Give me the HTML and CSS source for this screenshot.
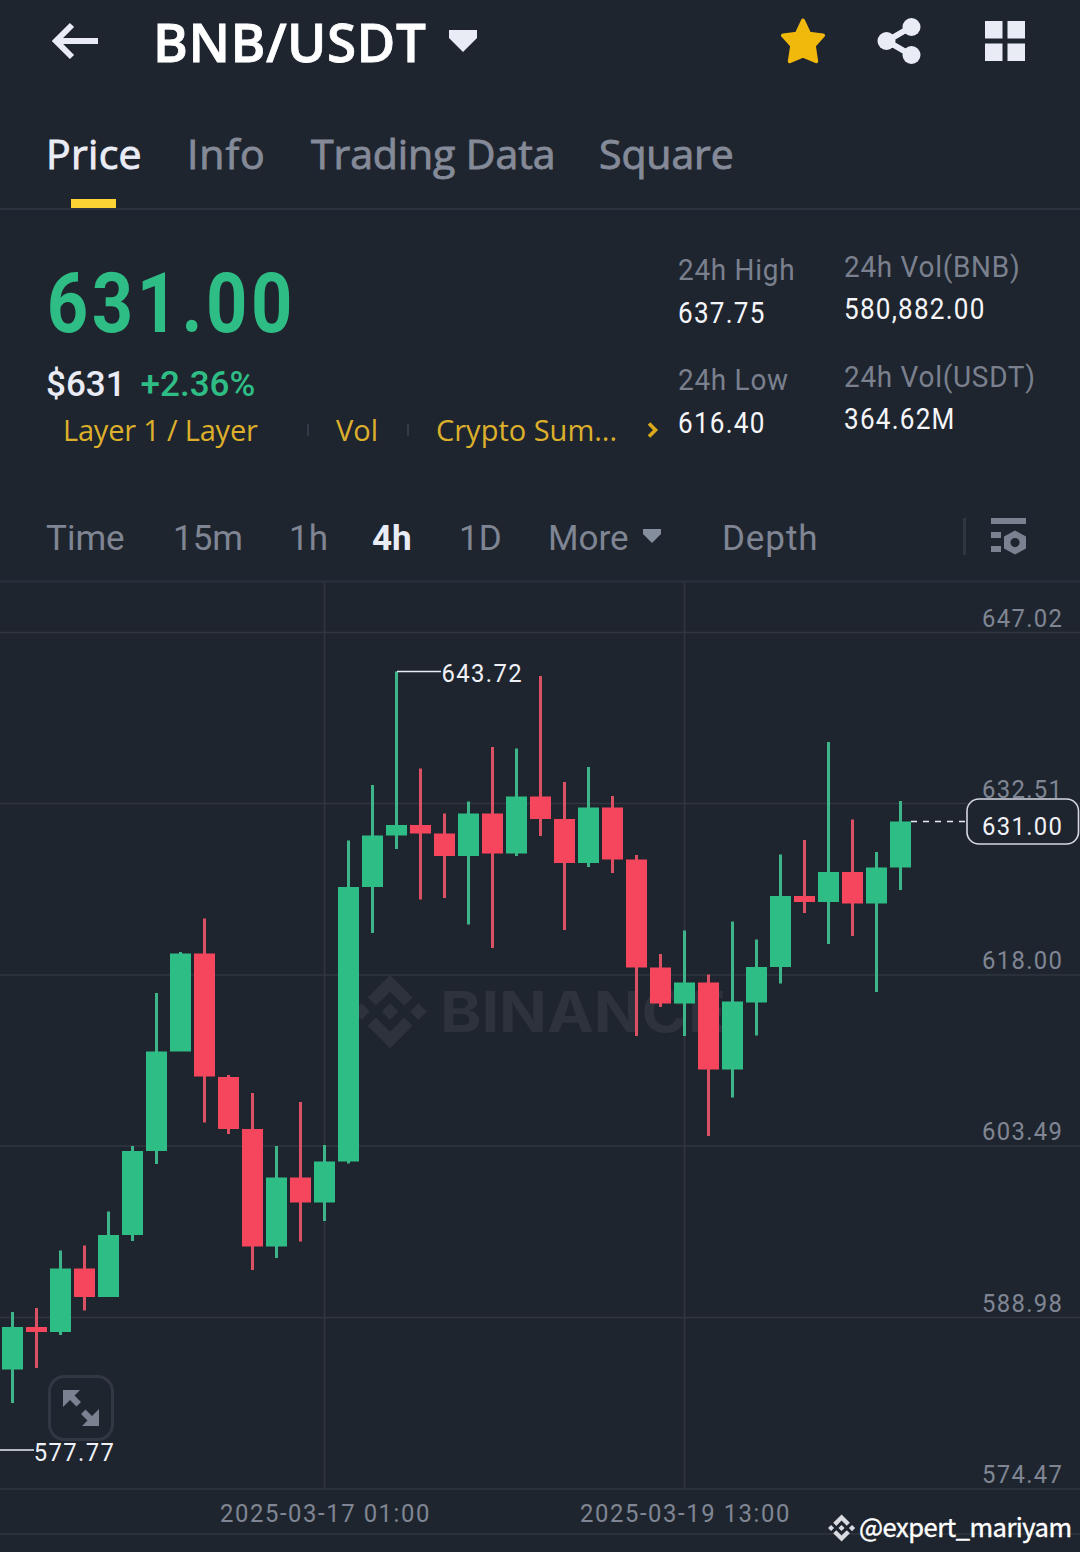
FILE: index.html
```html
<!DOCTYPE html>
<html lang="en">
<head>
<meta charset="utf-8">
<title>BNB/USDT</title>
<link rel="stylesheet" href="styles.css">
</head>
<body>
<header class="topbar">
  <svg class="back" viewBox="0 0 46 38" width="46" height="38"><path d="M20 3 4 19l16 16M4 19h42" fill="none" stroke="#eaecf5" stroke-width="6"/></svg>
  <h1 class="pair">BNB/USDT</h1>
  <svg class="pair-caret" viewBox="0 0 28 22" width="28" height="22"><path d="M0 0h28v8L14 22 0 8z" fill="#eaecf5"/></svg>
  <div class="actions">
    <svg viewBox="0 0 46 46" width="46" height="46"><path d="M23 2.500 29.200 15.800 43 17.500 33.800 27.600 36.200 43.200 23 37.600 9.800 43.200 12.200 27.600 3 17.500 16.800 15.800z" fill="#f0b90b" stroke="#f0b90b" stroke-width="4" stroke-linejoin="round"/></svg>
    <svg class="share" viewBox="0 0 44 46" width="44" height="46"><path d="M34 9 10 23l24 14" fill="none" stroke="#eaecf5" stroke-width="6"/><circle cx="34.500" cy="9" r="9" fill="#eaecf5"/><circle cx="9.500" cy="23" r="9" fill="#eaecf5"/><circle cx="34.500" cy="37" r="9" fill="#eaecf5"/></svg>
    <svg class="apps" viewBox="0 0 40 40" width="40" height="40"><path d="M0 0h17.500v17.500H0zM22.500 0H40v17.500H22.500zM0 22.500h17.500V40H0zM22.500 22.500H40V40H22.500z" fill="#eaecf5"/></svg>
  </div>
</header>

<nav class="tabs">
  <span class="tab tab-active">Price</span>
  <span class="tab tab-info">Info</span>
  <span class="tab">Trading Data</span>
  <span class="tab">Square</span>
</nav>

<section class="summary">
  <div class="quote">
    <div class="last">631.00</div>
    <div class="sub"><span class="fiat">$631</span><span class="change">+2.36%</span></div>
    <div class="tags">
      <span class="tag-layer">Layer 1 / Layer</span><i class="sep"></i>
      <span class="tag-vol">Vol</span><i class="sep"></i>
      <span class="tag-sum">Crypto Sum...</span>
      <svg class="chev" viewBox="0 0 12 16" width="12" height="16"><path d="M2 1.500 8.500 8 2 14.500" fill="none" stroke="#d9a91a" stroke-width="3.600"/></svg>
    </div>
  </div>
  <dl class="stats">
    <div><dt>24h High</dt><dd>637.75</dd></div>
    <div><dt>24h Low</dt><dd>616.40</dd></div>
  </dl>
  <dl class="stats stats-vol">
    <div><dt>24h Vol(BNB)</dt><dd>580,882.00</dd></div>
    <div><dt>24h Vol(USDT)</dt><dd>364.62M</dd></div>
  </dl>
</section>

<nav class="frames">
  <span>Time</span>
  <span>15m</span>
  <span>1h</span>
  <span class="frame-active">4h</span>
  <span>1D</span>
  <span class="more">More<svg viewBox="0 0 18 14" width="18" height="14"><path d="M0 0h18v5L9 14 0 5z" fill="#848e9c"/></svg></span>
  <span class="depth">Depth</span>
  <span class="tools">
    <svg viewBox="0 0 36 37" width="36" height="37"><path d="M0 0h35v6H0zM0 14h10v6H0zM0 28h10v6H0z" fill="#7b8190"/><path fill-rule="evenodd" d="M24 12.500 35 18.500v12L24 36.500l-11-6v-12zM24 20a4.600 4.600 0 1 0 0 9.200 4.600 4.600 0 0 0 0-9.200z" fill="#7b8190"/></svg>
  </span>
</nav>

<main class="chart">
  <svg class="plot" viewBox="0 580 1080 972" width="1080" height="972">
    <defs>
      <path id="mark" d="M16.624 13.9202l2.7175 2.7154-7.353 7.353-7.353-7.352 2.7175-2.7164 4.6355 4.6595 4.6356-4.6595zm4.6366-4.6366L24 12l-2.7154 2.7164L18.5682 12l2.6924-2.7164zm-9.272.001l2.7163 2.6914-2.7164 2.7174v-.001L9.2721 12l2.7164-2.7154zm-9.2722-.001L5.4088 12l-2.6914 2.6924L0 12l2.7164-2.7164zM11.9885.0115l7.353 7.329-2.7174 2.7154-4.6356-4.6356-4.6355 4.6595-2.7174-2.7154 7.353-7.353z"/>
    </defs>
    <path class="rule" d="M0 581.500H1080"/>
    <path class="grid" d="M0 632.500H1080M0 803.500H1080M0 975H1080M0 1146H1080M0 1317.500H1080M0 1489H1080M324.500 582V1488M684.500 582V1488M0 1534H1080"/>
    <g class="watermark">
      <use href="#mark" transform="translate(353.500 975) scale(3.050)"/>
      <text x="440" y="1032" textLength="286" lengthAdjust="spacingAndGlyphs">BINANCE</text>
    </g>
    <path class="wick up" d="M12.500 1312V1403M60.500 1250.500V1335M108.500 1211.500V1290M132.500 1146V1241M156.500 993V1164M180.500 952V1050M276.500 1146V1258M324.500 1145V1221M348.500 840.500V1163.500M372.500 785V933M396.500 671.500V849M468.500 801.500V924.500M516.500 748.500V856M588.500 767V867M684.500 930.500V1036M732.500 921.500V1097.500M756.500 939.500V1035.500M780.500 854.500V983.500M828.500 742V944M876.500 852V992M900.500 801V890"/>
    <path class="wick down" d="M36.500 1308V1368M84.500 1245.500V1310.500M204.500 918.500V1122.500M228.500 1075V1134M252.500 1093V1270M300.500 1102V1241.500M420.500 768.500V899.500M444.500 813.500V898M492.500 747V948M540.500 676V836M564.500 782V930M612.500 796V873M636.500 855V1036M660.500 954V1007M708.500 974.500V1136M804.500 840V913M852.500 819.500V936"/>
    <path class="body up" d="M12.500 1327V1369.500M60.500 1268.500V1332M108.500 1235V1297M132.500 1151V1235M156.500 1051.500V1151M180.500 953.500V1051.500M276.500 1177.500V1246.500M324.500 1161.500V1202.500M348.500 887V1161.500M372.500 835.500V887M396.500 825V835.500M468.500 813.500V856M516.500 796.500V853.500M588.500 807.500V863M684.500 982.500V1003.500M732.500 1001.500V1069.500M756.500 967V1002.500M780.500 896V967M828.500 872V902M876.500 867.500V903.500M900.500 821.500V867.500"/>
    <path class="body down" d="M36.500 1327V1332M84.500 1268.500V1297M204.500 953.500V1076.500M228.500 1077V1129M252.500 1129V1246.500M300.500 1177.500V1202.500M420.500 825V833.500M444.500 833.500V856M492.500 813.500V853.500M540.500 796.500V819M564.500 819V863M612.500 807.500V859.500M636.500 859.500V967.500M660.500 967.500V1003.500M708.500 982.500V1069.500M804.500 896V902M852.500 872V903.500"/>
    <path class="lead" d="M397 671.500H441M0 1450H34"/>
    <path class="lead dashed" d="M911 821.500H966"/>
    <g class="label" transform="scale(.9 1)">
      <text x="1091" y="627" textLength="89">647.02</text>
      <text x="1091" y="798" textLength="89">632.51</text>
      <text x="1091" y="969" textLength="89">618.00</text>
      <text x="1091" y="1140" textLength="89">603.49</text>
      <text x="1091" y="1312" textLength="89">588.98</text>
      <text x="1091" y="1483" textLength="89">574.47</text>
      <text x="244.500" y="1522" textLength="232.500">2025-03-17 01:00</text>
      <text x="644.500" y="1522" textLength="232.500">2025-03-19 13:00</text>
    </g>
    <rect class="tag" x="967" y="799" width="111.500" height="45" rx="12"/>
    <g class="label bright" transform="scale(.9 1)">
      <text x="490.500" y="682" textLength="89">643.72</text>
      <text x="37.500" y="1461" textLength="89">577.77</text>
      <text x="1091" y="835" textLength="89">631.00</text>
    </g>
    <rect class="expand" x="49.500" y="1376.500" width="63" height="63" rx="15"/>
    <path class="arrows" d="M63 1390h17l-5.500 5.500 6.500 6.500-4.500 4.500-6.500-6.500-7 7zM99 1426H82l5.500-5.500-6.500-6.500 4.500-4.500 6.500 6.500 7-7z"/>
    <use href="#mark" class="user-mark" transform="translate(828 1514.500) scale(1.130)"/>
    <text class="user" x="859" y="1537" textLength="213">@expert_mariyam</text>
  </svg>
</main>
</body>
</html>
```
FILE: styles.css
```css
* { box-sizing: border-box; }

body {
  margin: 0;
  width: 1080px;
  background: #1f252f;
  color: #eaecf5;
  font-family: Roboto, "Liberation Sans", sans-serif;
}

svg { display: block; flex: none; }

.topbar {
  display: flex;
  align-items: center;
  height: 81px;
  padding: 0 55px 0 52px;
}
.pair {
  margin: 0 0 0 55px;
  width: 296px;
  padding-top: 2px;
  font: 600 53px/60px "Open Sans", sans-serif;
  letter-spacing: 0.5px;
  -webkit-text-stroke: 0.8px #fff;
  color: #fff;
  white-space: nowrap;
}
.actions { display: flex; align-items: center; margin-left: auto; }
.share { margin-left: 51px; }
.apps { margin-left: 64px; }

.tabs {
  display: grid;
  grid-template-columns: 141px 124px 288px 200px;
  height: 129px;
  padding: 52px 0 0 46px;
  border-bottom: 2px solid #2d333e;
  font: 400 41px/40px "Open Sans", sans-serif;
  -webkit-text-stroke: 0.9px currentColor;
  letter-spacing: -0.1px;
  color: #848a98;
  white-space: nowrap;
}
.tab-info { letter-spacing: 0.9px; }
.tab-active {
  display: flex;
  flex-direction: column;
  justify-content: space-between;
  letter-spacing: 0.3px;
  color: #eaecf5;
}
.tab-active::after {
  content: "";
  width: 45px;
  height: 9px;
  margin-left: 25px;
  background: #fcd535;
}

.summary {
  display: grid;
  grid-template-columns: 678px 166px 236px;
  height: 285px;
}
.quote { padding: 52px 0 0 46px; white-space: nowrap; }
.last {
  padding-left: 1px;
  font: 700 83px/84px Roboto, sans-serif;
  letter-spacing: 4px;
  color: #2ebd85;
  transform: scaleX(0.87);
  transform-origin: 0 0;
}
.sub {
  display: flex;
  gap: 15px;
  margin-top: 19px;
  font-size: 35px;
  font-weight: 500;
  line-height: 40px;
}
.change { color: #2ebd85; }
.tags {
  display: flex;
  align-items: center;
  margin-top: 10px;
  padding-left: 17px;
  font: 400 29px/30px "Open Sans", sans-serif;
  color: #ddb02b;
}
.sep { width: 2px; height: 12px; background: #343a45; }
.tag-layer { width: 244px; letter-spacing: -0.2px; }
.tag-vol { width: 71px; margin-left: 27px; }
.tag-sum { width: 211px; margin-left: 27px; }

.stats {
  display: flex;
  flex-direction: column;
  gap: 24px;
  margin: 0;
  padding-top: 38px;
  font-size: 30px;
  line-height: 43px;
  white-space: nowrap;
}
.stats-vol { padding-top: 35.5px; gap: 25px; line-height: 42.5px; }
.stats dt {
  color: #7a808e;
  letter-spacing: 0.8px;
  transform: scaleX(0.93);
  transform-origin: 0 0;
}
.stats dd {
  margin: 0;
  color: #f5f6fa;
  letter-spacing: 1.4px;
  transform: scaleX(0.87);
  transform-origin: 0 0;
}

.frames {
  display: grid;
  grid-template-columns: 127px 116px 83px 87px 89px 174px 241px 1fr;
  align-items: center;
  height: 85px;
  padding-left: 46px;
  font-size: 35px;
  line-height: 87px;
  color: #7f8593;
}
.frame-active { font-weight: 700; color: #eaecf5; }
.more { display: flex; align-items: center; gap: 14px; }
.more svg { margin-bottom: 6px; }
.depth { letter-spacing: 0.9px; }
.tools {
  display: flex;
  align-items: center;
  height: 37px;
  margin-bottom: 4px;
  padding-left: 25px;
  border-left: 3px solid #303640;
}

.chart { height: 972px; }
.rule { stroke: #282e39; stroke-width: 3; }
.grid { fill: none; stroke: #303640; stroke-width: 1.5; }
.watermark { fill: #2d323d; font: 700 57px Inter, sans-serif; }
.wick { fill: none; stroke-width: 3; }
.body { fill: none; stroke-width: 21; }
.up { stroke: #2ebd85; }
.down { stroke: #f6465d; }
.wick.up { stroke: #3eb588; }
.wick.down { stroke: #dc5064; }
.lead { fill: none; stroke: #eaecf5; stroke-width: 1.6; }
.dashed { stroke-dasharray: 6 6; }
.label { font: 400 26.5px Roboto, sans-serif; fill: #7f8593; }
.bright { fill: #f0f1f7; }
.tag { fill: #1f252f; stroke: #d5d8e2; stroke-width: 1.6; }
.expand { fill: #1f252f; stroke: #323843; stroke-width: 3; }
.arrows { fill: #7b8190; }
.user-mark { fill: #d9dbe1; }
.user {
  font: 400 25.5px "Noto Sans CJK SC", sans-serif;
  fill: #fff;
  stroke: #fff;
  stroke-width: 0.4;
}
```
